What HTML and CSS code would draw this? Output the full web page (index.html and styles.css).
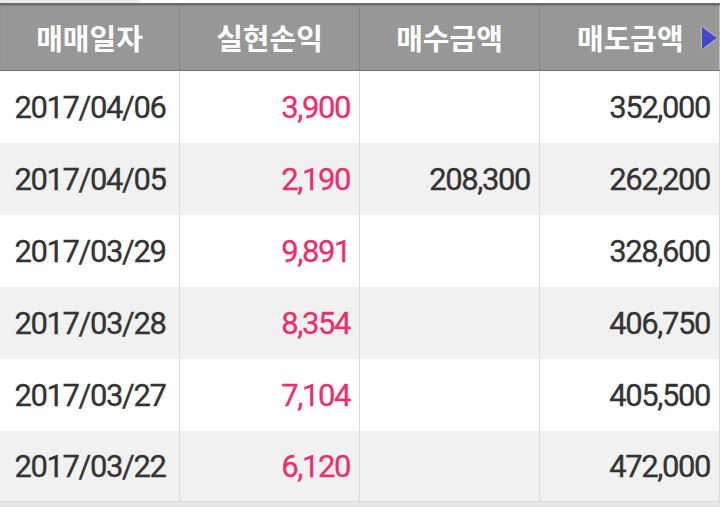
FILE: index.html
```html
<!DOCTYPE html>
<html lang="ko">
<head>
<meta charset="utf-8">
<link rel="stylesheet" href="styles.css">
</head>
<body>
<div class="topbar"><div class="topbar-light"></div></div>
<div class="grid">
  <div class="row head">
    <div class="cell">매매일자</div>
    <div class="cell">실현손익</div>
    <div class="cell">매수금액</div>
    <div class="cell last">매도금액<span class="arrow"></span></div>
  </div>
  <div class="row">
    <div class="cell date">2017/04/06</div>
    <div class="cell num pink">3,900</div>
    <div class="cell num"></div>
    <div class="cell num">352,000</div>
  </div>
  <div class="row alt">
    <div class="cell date">2017/04/05</div>
    <div class="cell num pink">2,190</div>
    <div class="cell num">208,300</div>
    <div class="cell num">262,200</div>
  </div>
  <div class="row">
    <div class="cell date">2017/03/29</div>
    <div class="cell num pink">9,891</div>
    <div class="cell num"></div>
    <div class="cell num">328,600</div>
  </div>
  <div class="row alt">
    <div class="cell date">2017/03/28</div>
    <div class="cell num pink">8,354</div>
    <div class="cell num"></div>
    <div class="cell num">406,750</div>
  </div>
  <div class="row">
    <div class="cell date">2017/03/27</div>
    <div class="cell num pink">7,104</div>
    <div class="cell num"></div>
    <div class="cell num">405,500</div>
  </div>
  <div class="row alt lastrow">
    <div class="cell date">2017/03/22</div>
    <div class="cell num pink">6,120</div>
    <div class="cell num"></div>
    <div class="cell num">472,000</div>
  </div>
</div>
</body>
</html>
```
FILE: styles.css
```css
* { box-sizing: border-box; }
html, body { margin: 0; padding: 0; }
body {
  width: 720px;
  height: 507px;
  overflow: hidden;
  background: #e6e6e6;
  font-family: Roboto, "Noto Sans CJK KR", sans-serif;
}
.topbar {
  height: 3px;
  background: #ffffff;
  display: flex;
}
.topbar-light {
  width: 140px;
  background: #ececec;
}
.grid {
  width: 720px;
  background: #fff;
  border-bottom: 1px solid #d4d4d4;
}
.row {
  display: grid;
  grid-template-columns: 180px 180px 180px 180px;
  height: 72px;
}
.row.alt { background: #f1f1f1; }
.row.lastrow { height: 70px; }
.cell {
  border-right: 1px solid #dcdcdc;
  display: flex;
  align-items: center;
  font-size: 31px;
  font-weight: 400;
  letter-spacing: -1.4px;
  color: #333333;
  -webkit-text-stroke: 0.3px currentColor;
}
.head {
  height: 68px;
  background: #979797;
  border-top: 2px solid #6a6a6a;
  border-bottom: 1px solid #777777;
  box-shadow: inset 0 1px 1px rgba(0,0,0,0.15);
}
.head .cell {
  justify-content: center;
  color: #ffffff;
  font-family: "Noto Sans CJK KR", sans-serif;
  font-weight: 700;
  font-size: 29px;
  letter-spacing: 0;
  -webkit-text-stroke: 0;
  border-right: 1px solid #858585;
  padding-bottom: 2px;
}
.head .cell.last {
  justify-content: flex-start;
  padding-left: 37px;
  position: relative;
  border-right: 1px solid #bdbdbd;
}
.arrow {
  position: absolute;
  right: 2px;
  top: 22px;
  width: 0;
  height: 0;
  border-top: 11px solid transparent;
  border-bottom: 11px solid transparent;
  border-left: 15px solid #4646c8;
  filter: drop-shadow(0 0 1px #e0e0f0);
}
.date {
  justify-content: center;
  padding-left: 1px;
}
.num {
  justify-content: flex-end;
  padding-right: 9px;
}
.pink { color: #e8306e; }
```
